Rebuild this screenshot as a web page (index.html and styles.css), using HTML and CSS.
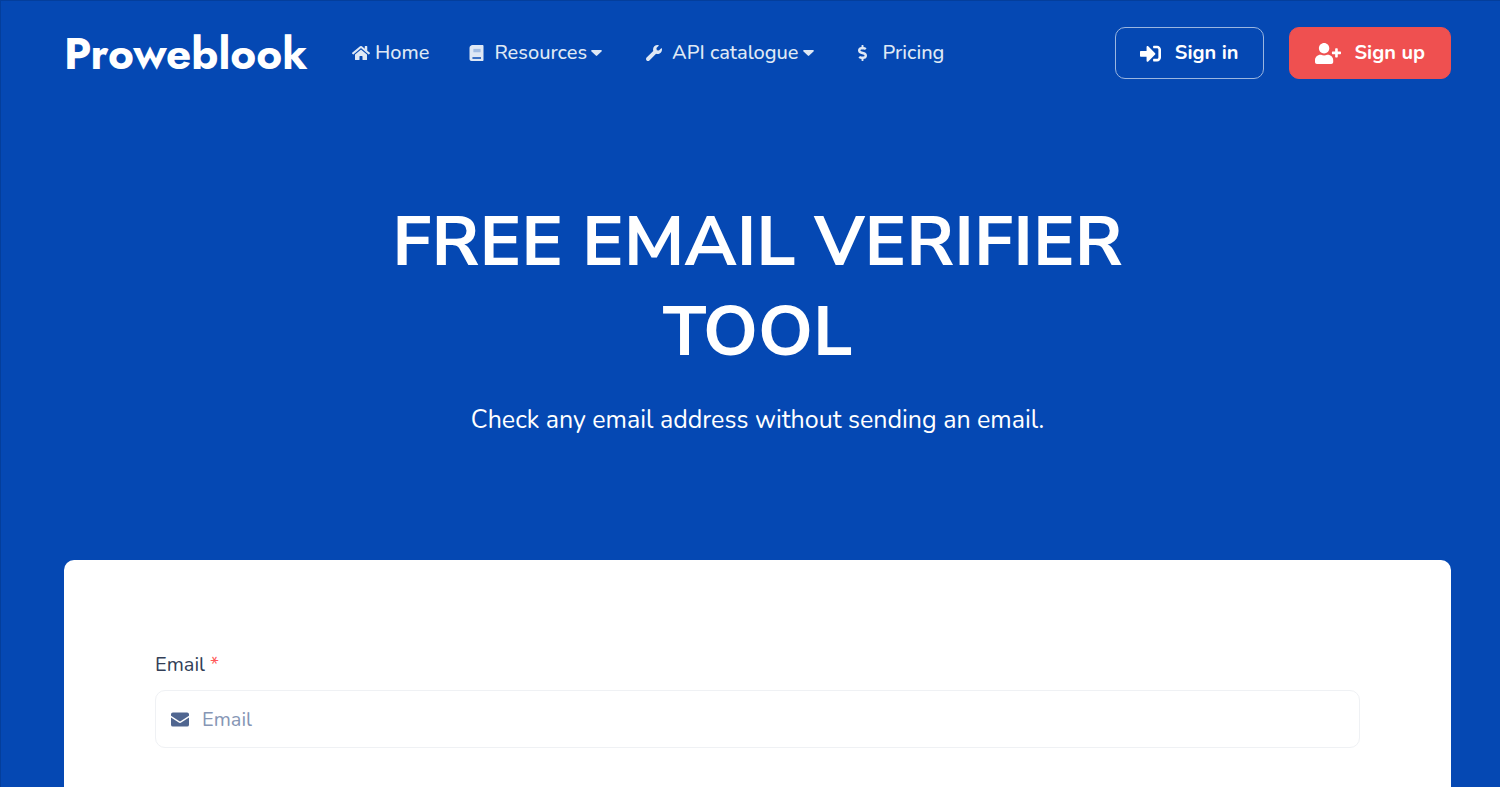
FILE: index.html
```html
<!DOCTYPE html>
<html lang="en">
<head>
<meta charset="utf-8">
<meta name="viewport" content="width=device-width, initial-scale=1">
<title>Free Email Verifier Tool - Proweblook</title>
<link rel="stylesheet" href="styles.css">
</head>
<body>
<header class="site-header">
  <a class="logo" href="#">Proweblook</a>
  <nav class="nav">
    <a class="nav-item nav-home" href="#">
      <svg class="icon icon-home" viewBox="0 0 576 512" aria-hidden="true"><path d="M280.37 148.26L96 300.11V464a16 16 0 0 0 16 16l112.06-.29a16 16 0 0 0 15.92-16V368a16 16 0 0 1 16-16h64a16 16 0 0 1 16 16v95.64a16 16 0 0 0 16 16.05L464 480a16 16 0 0 0 16-16V300L295.67 148.26a12.19 12.19 0 0 0-15.3 0zM571.6 251.47L488 182.56V44.05a12 12 0 0 0-12-12h-56a12 12 0 0 0-12 12v72.61L318.47 43a48 48 0 0 0-61 0L4.34 251.47a12 12 0 0 0-1.6 16.9l25.5 31A12 12 0 0 0 45.15 301l235.22-193.74a12.19 12.19 0 0 1 15.3 0L530.9 301a12 12 0 0 0 16.9-1.6l25.5-31a12 12 0 0 0-1.7-16.93z"/></svg>
      <span>Home</span>
    </a>
    <button class="nav-item" type="button">
      <svg class="icon icon-book" viewBox="0 0 448 512" aria-hidden="true"><path fill-rule="evenodd" d="M96 0h320c18 0 32 14 32 32v448c0 18-14 32-32 32H64c-36 0-64-28-64-64V96C0 43 43 0 96 0zm16 392c-16 0-26 10-26 22s10 22 26 22h256v-44z"/><path class="book-label" d="M124 124h232v108H124z"/></svg>
      <span>Resources</span>
      <svg class="caret" viewBox="0 0 11 6" aria-hidden="true"><path d="M1 0h9c1 0 1 1 .5 1.500L6.200 5.600a1 1 0 0 1-1.400 0L.5 1.500C0 1 0 0 1 0z"/></svg>
    </button>
    <button class="nav-item nav-api" type="button">
      <svg class="icon icon-wrench" viewBox="0 0 512 512" aria-hidden="true"><path d="M507.73 109.1c-2.24-9.03-13.54-12.09-20.12-5.51l-74.36 74.36-67.88-11.31-11.31-67.88 74.36-74.36c6.62-6.62 3.43-17.9-5.66-20.16-47.38-11.74-99.55.91-136.58 37.93-39.64 39.64-50.55 97.1-34.05 147.2L18.74 402.76c-24.99 24.99-24.99 65.51 0 90.5 24.99 24.99 65.51 24.99 90.5 0l213.21-213.21c50.12 16.71 107.47 5.68 147.37-34.22 37.07-37.07 49.7-89.32 37.91-136.73z"/></svg>
      <span>API catalogue</span>
      <svg class="caret" viewBox="0 0 11 6" aria-hidden="true"><path d="M1 0h9c1 0 1 1 .5 1.500L6.200 5.600a1 1 0 0 1-1.400 0L.5 1.500C0 1 0 0 1 0z"/></svg>
    </button>
    <a class="nav-item nav-pricing" href="#">
      <svg class="icon icon-dollar" viewBox="0 0 288 512" aria-hidden="true"><path d="M209.2 233.4l-108-31.6C88.7 198.2 80 186.5 80 173.5c0-16.3 13.2-29.5 29.5-29.5h66.3c12.2 0 24.2 3.7 34.2 10.5 6.1 4.1 14.3 3.1 19.5-2l34.8-34c7.1-6.9 6.1-18.4-1.8-24.5C238 74.8 207.4 64.1 176 64V16c0-8.8-7.2-16-16-16h-32c-8.8 0-16 7.2-16 16v48h-2.5C45.8 64-5.4 118.7.5 183.6c4.2 46.1 39.4 83.6 83.8 96.6l102.5 30c12.5 3.7 21.2 15.3 21.2 28.3 0 16.3-13.2 29.5-29.5 29.5h-66.3C100 368 88 364.3 78 357.5c-6.1-4.1-14.3-3.1-19.5 2l-34.8 34c-7.1 6.9-6.1 18.4 1.8 24.5 24.5 19.2 55.1 29.9 86.5 30v48c0 8.8 7.2 16 16 16h32c8.8 0 16-7.2 16-16v-48.2c46.6-.9 90.3-28.6 105.7-72.7 21.5-61.6-14.6-124.8-72.5-141.7z"/></svg>
      <span>Pricing</span>
    </a>
  </nav>
  <div class="actions">
    <a class="btn btn-outline" href="#">
      <svg class="icon icon-signin" viewBox="0 0 512 512" aria-hidden="true"><path d="M416 448h-84c-6.6 0-12-5.4-12-12v-40c0-6.6 5.4-12 12-12h84c17.7 0 32-14.3 32-32V160c0-17.7-14.3-32-32-32h-84c-6.6 0-12-5.4-12-12V76c0-6.6 5.4-12 12-12h84c53 0 96 43 96 96v192c0 53-43 96-96 96zm-47-201L201 79c-15-15-41-4.5-41 17v96H24c-13.3 0-24 10.7-24 24v96c0 13.3 10.7 24 24 24h136v96c0 21.5 26 32 41 17l168-168c9.3-9.4 9.3-24.6 0-34z"/></svg>
      <span>Sign in</span>
    </a>
    <a class="btn btn-danger" href="#">
      <svg class="icon icon-signup" viewBox="0 0 640 512" aria-hidden="true"><path d="M624 208h-64v-64c0-8.800-7.200-16-16-16h-32c-8.800 0-16 7.200-16 16v64h-64c-8.800 0-16 7.200-16 16v32c0 8.800 7.200 16 16 16h64v64c0 8.800 7.200 16 16 16h32c8.800 0 16-7.200 16-16v-64h64c8.800 0 16-7.200 16-16v-32c0-8.800-7.200-16-16-16zm-400 48c70.700 0 128-57.300 128-128S294.700 0 224 0 96 57.300 96 128s57.300 128 128 128zm89.600 32h-16.700c-22.200 10.200-46.900 16-72.900 16s-50.600-5.800-72.900-16h-16.700C60.200 288 0 348.200 0 422.400V464c0 26.500 21.500 48 48 48h352c26.500 0 48-21.500 48-48v-41.600c0-74.200-60.200-134.400-134.400-134.400z"/></svg>
      <span>Sign up</span>
    </a>
  </div>
</header>
<main class="main">
  <section class="hero">
    <h1 class="hero-title">FREE EMAIL VERIFIER TOOL</h1>
    <p class="hero-text">Check any email address without sending an email.</p>
  </section>
  <form class="card">
    <label class="label" for="email">Email <span class="required">*</span></label>
    <div class="field">
      <svg class="icon icon-mail" viewBox="0 0 19 15" aria-hidden="true"><path d="M2 0h15a2 2 0 0 1 2 2v1.500L10.500 9.200a2 2 0 0 1-2 0L0 3.500V2a2 2 0 0 1 2-2zM0 5.300l7.800 5.200a3 3 0 0 0 3.400 0L19 5.300V13a2 2 0 0 1-2 2H2a2 2 0 0 1-2-2z"/></svg>
      <input class="input" id="email" type="email" placeholder="Email">
    </div>
  </form>
</main>
</body>
</html>
```

FILE: styles.css
```css
* {
  box-sizing: border-box;
}

body {
  margin: 0;
  min-height: 100vh;
  display: flex;
  flex-direction: column;
  padding: 0 49px 0 63px;
  border: 1px solid #043e9b;
  border-width: 1px 0 0 1px;
  background: #0548b3;
  color: #fff;
  font-family: Nunito, Lato, sans-serif;
  font-size: 20px;
  line-height: 28px;
}

a {
  color: inherit;
  text-decoration: none;
}

.icon,
.caret {
  display: block;
  flex: none;
  fill: currentColor;
}

.site-header {
  display: flex;
  align-items: center;
  padding-top: 26px;
}

.logo {
  min-width: 245px;
  padding-top: 2px;
  font-family: Jost, Poppins, Lato, sans-serif;
  font-size: 44px;
  line-height: 50px;
  font-weight: 700;
}

.nav {
  display: flex;
  align-items: center;
  gap: 40px;
  margin-left: 43px;
  color: #dfe8f5;
  font-weight: 500;
}

.nav-item {
  display: flex;
  align-items: center;
  gap: 10px;
  padding: 0;
  border: 0;
  background: none;
  color: inherit;
  font: inherit;
  white-space: nowrap;
}

.nav-home {
  gap: 5px;
}

.nav-api,
.nav-pricing {
  margin-left: 4px;
}

.nav-pricing {
  gap: 16px;
}

.icon-home {
  width: 18px;
  height: 16px;
}

.icon-book {
  width: 15px;
  height: 16px;
}

.book-label {
  fill: #a3bde3;
}

.icon-wrench {
  width: 16px;
  height: 16px;
}

.icon-dollar {
  width: 9px;
  height: 16px;
}

.caret {
  width: 11px;
  height: 6px;
  margin-left: -6px;
}

.actions {
  display: flex;
  gap: 25px;
  margin-left: auto;
}

.btn {
  display: flex;
  align-items: center;
  gap: 14px;
  padding: 11px 25px;
  border: 1px solid #ee5050;
  border-radius: 10px;
  font-weight: 700;
  white-space: nowrap;
}

.btn-outline {
  padding: 11px 24px;
  border-color: #9bb6e0;
}

.btn-danger {
  background: #ef5050;
}

.icon-signin {
  width: 21px;
  height: 21px;
}

.icon-signup {
  width: 26px;
  height: 21px;
}

.main {
  flex: 1;
  display: flex;
  flex-direction: column;
}

.hero {
  padding: 118px 0 120px;
  text-align: center;
}

.hero-title {
  max-width: 920px;
  margin: 0 auto 23px;
  font-family: "Nunito Sans", Nunito, Lato, sans-serif;
  font-size: 70px;
  line-height: 90px;
  font-weight: 700;
}

.hero-text {
  margin: 0;
  font-size: 25px;
  line-height: 40px;
}

.card {
  flex: 1;
  padding: 91px 91px 38px;
  border-radius: 10px 10px 0 0;
  background: #fff;
  color: #333f57;
}

.label {
  display: block;
  margin-bottom: 11px;
}

.required {
  color: #ff5a5a;
}

.field {
  display: flex;
  align-items: center;
  gap: 13px;
  padding: 0 15px;
  border: 1px solid #eff1f4;
  border-radius: 10px;
}

.icon-mail {
  width: 18px;
  height: 15px;
  color: #506690;
}

.input {
  flex: 1;
  min-width: 0;
  height: 56px;
  padding: 0;
  border: 0;
  outline: 0;
  background: transparent;
  color: #333f57;
  font: inherit;
}

.input::placeholder {
  color: #8696b5;
  opacity: 1;
}
```
